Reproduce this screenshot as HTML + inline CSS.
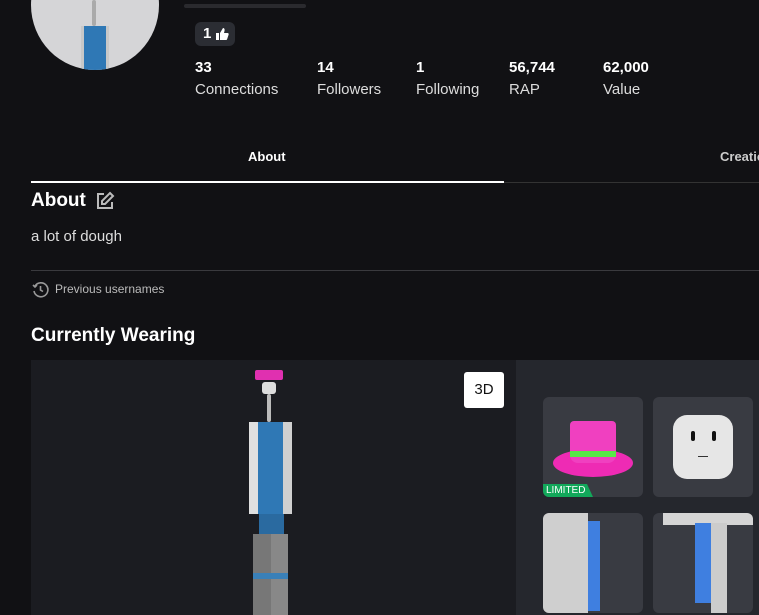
<!DOCTYPE html>
<html><head><meta charset="utf-8"><style>
*{margin:0;padding:0;box-sizing:border-box}
html,body{width:759px;height:615px;overflow:hidden;background:#111114;font-family:"Liberation Sans",sans-serif;color:#fff}
.abs{position:absolute}
.stat b{display:block;font-size:15px;font-weight:bold}
.stat span{display:block;font-size:15px;color:#ddd;margin-top:5px}
</style></head><body>
<div class="abs" style="left:31px;top:-60px;width:128px;height:130px;border-radius:50%;background:#d5d5d7;overflow:hidden">
  <div class="abs" style="left:50px;top:86px;width:28px;height:60px;background:#2f78b5;border-left:3px solid #c8c8c8;border-right:3px solid #c8c8c8"></div>
  <div class="abs" style="left:61px;top:60px;width:4px;height:26px;border:2px solid #aaa;border-radius:3px"></div>
</div>
<div class="abs" style="left:184px;top:4px;width:122px;height:4px;background:#2a2a2e;border-radius:3px"></div>
<div class="abs" style="left:195px;top:22px;width:40px;height:24px;background:#2b2d33;border-radius:6px;font-size:15px;font-weight:bold;line-height:24px;padding-left:8px">1</div>
<svg class="abs" style="left:215px;top:27px" width="14" height="14" viewBox="0 0 14 14" fill="#fff"><path d="M1 6h3v7H1zM5 6l3-5c1 0 2 1 1.5 3L9 6h3.5c1 0 1.5 1 1 2l-1.5 4.5c-.3.4-.7.5-1 .5H5z"/></svg>
<div class="abs stat" style="left:195px;top:59px"><b>33</b><span>Connections</span></div>
<div class="abs stat" style="left:317px;top:59px"><b>14</b><span>Followers</span></div>
<div class="abs stat" style="left:416px;top:59px"><b>1</b><span>Following</span></div>
<div class="abs stat" style="left:509px;top:59px"><b>56,744</b><span>RAP</span></div>
<div class="abs stat" style="left:603px;top:59px"><b>62,000</b><span>Value</span></div>
<div class="abs" style="left:248px;top:149px;font-size:13px;font-weight:bold">About</div>
<div class="abs" style="left:720px;top:149px;font-size:13px;font-weight:bold;color:#ccc;white-space:nowrap">Creations</div>
<div class="abs" style="left:31px;top:182px;width:728px;height:1px;background:#333"></div>
<div class="abs" style="left:31px;top:181px;width:473px;height:2px;background:#fff"></div>
<div class="abs" style="left:31px;top:190px;font-size:19px;font-weight:bold">About</div>
<svg class="abs" style="left:95px;top:191px" width="20" height="20" viewBox="0 0 20 20" fill="none" stroke="#bbb" stroke-width="2"><path d="M9 3H3v14h14v-6"/><path d="M15 2l3 3-8 8H7v-3z"/></svg>
<div class="abs" style="left:31px;top:228px;font-size:15px;color:#ddd">a lot of dough</div>
<div class="abs" style="left:31px;top:270px;width:728px;height:1px;background:#3a3a3e"></div>
<svg class="abs" style="left:32px;top:281px" width="17" height="17" viewBox="0 0 17 17" fill="none" stroke="#999" stroke-width="1.6"><path d="M3 5a7 7 0 1 1-1 5"/><path d="M1 4l2 2 2-2"/><path d="M8.5 5v4l2.5 1.5"/></svg>
<div class="abs" style="left:55px;top:282px;font-size:12px;color:#bbb">Previous usernames</div>
<div class="abs" style="left:31px;top:325px;font-size:19px;font-weight:bold">Currently Wearing</div>
<div class="abs" style="left:31px;top:360px;width:485px;height:255px;background:#1b1c21"></div>
<div class="abs" style="left:516px;top:360px;width:243px;height:255px;background:#25272d"></div>
<div class="abs" style="left:464px;top:372px;width:40px;height:36px;background:#fff;border-radius:3px;color:#111;font-size:15px;text-align:center;line-height:36px">3D</div>
<div class="abs" style="left:255px;top:370px;width:28px;height:10px;background:#e030b0;border-radius:2px"></div>
<div class="abs" style="left:262px;top:382px;width:14px;height:12px;background:#ddd;border-radius:3px"></div>
<div class="abs" style="left:267px;top:394px;width:4px;height:28px;border:2px solid #bbb;border-radius:3px"></div>
<div class="abs" style="left:249px;top:422px;width:43px;height:92px;background:#2f78b5;border-left:9px solid #e0e0e0;border-right:9px solid #d0d0d0"></div>
<div class="abs" style="left:259px;top:514px;width:25px;height:20px;background:#2a6aa0"></div>
<div class="abs" style="left:253px;top:534px;width:18px;height:81px;background:#777"></div>
<div class="abs" style="left:271px;top:534px;width:17px;height:81px;background:#888"></div>
<div class="abs" style="left:253px;top:573px;width:35px;height:6px;background:#3a80b8"></div>
<div class="abs" style="left:543px;top:397px;width:100px;height:100px;background:#393b42;border-radius:6px;overflow:hidden">
  <div class="abs" style="left:10px;top:52px;width:80px;height:28px;background:#ee2bb4;border-radius:50%"></div>
  <div class="abs" style="left:27px;top:24px;width:46px;height:42px;background:#f040c0;border-radius:4px 4px 8px 8px"></div>
  <div class="abs" style="left:27px;top:54px;width:46px;height:6px;background:#58e848"></div>
  <div class="abs" style="left:0;top:87px;width:50px;height:13px;background:#12a85a;clip-path:polygon(0 0,88% 0,100% 100%,0 100%);font-size:10px;line-height:13px;padding-left:3px">LIMITED</div>
</div>
<div class="abs" style="left:653px;top:397px;width:100px;height:100px;background:#393b42;border-radius:6px">
  <div class="abs" style="left:20px;top:18px;width:60px;height:64px;background:#e6e6e6;border-radius:14px"></div>
  <div class="abs" style="left:38px;top:34px;width:4px;height:10px;background:#111;border-radius:2px"></div>
  <div class="abs" style="left:59px;top:34px;width:4px;height:10px;background:#111;border-radius:2px"></div>
  <div class="abs" style="left:45px;top:59px;width:10px;height:1px;background:#333"></div>
</div>
<div class="abs" style="left:543px;top:513px;width:100px;height:100px;background:#393b42;border-radius:6px;overflow:hidden">
  <div class="abs" style="left:0;top:0;width:45px;height:100px;background:#cfcfcf"></div>
  <div class="abs" style="left:45px;top:8px;width:12px;height:90px;background:#3f7fe0"></div>
</div>
<div class="abs" style="left:653px;top:513px;width:100px;height:100px;background:#393b42;border-radius:6px;overflow:hidden">
  <div class="abs" style="left:10px;top:0;width:90px;height:12px;background:#d5d5d5"></div>
  <div class="abs" style="left:58px;top:10px;width:16px;height:90px;background:#ccc"></div>
  <div class="abs" style="left:42px;top:10px;width:16px;height:80px;background:#3f7fe0"></div>
</div>
</body></html>
